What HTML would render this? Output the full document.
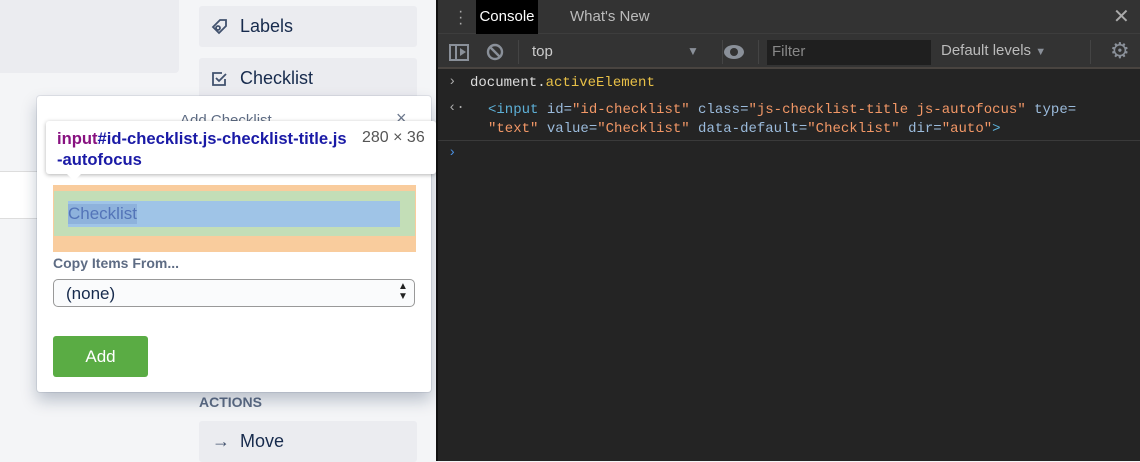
<!DOCTYPE html>
<html><head><style>
*{margin:0;padding:0;box-sizing:border-box}
body{width:1140px;height:461px;overflow:hidden;position:relative;background:#f4f5f7;font-family:"Liberation Sans",sans-serif}
.a{position:absolute}
.btn{position:absolute;left:199px;width:218px;height:41px;background:#ebecf0;border-radius:3px;font-size:18px;color:#172b4d;line-height:41px;padding-left:41px}
.dt{left:438px;top:0;width:702px;height:461px;background:#242424}
.mono{font-family:"Liberation Mono",monospace;font-size:14px}
</style></head><body>
<div class="a" style="left:0;top:0;width:179px;height:73px;background:#ebecf0;border-radius:0 0 4px 0"></div>
<div class="a" style="left:0;top:171px;width:40px;height:48px;background:#fff;border-top:1px solid #ddd;border-bottom:1px solid #ddd"></div>
<div class="btn" style="top:6px">Labels</div>
<svg class="a" style="left:210px;top:17px" width="20" height="20" viewBox="0 0 20 20" fill="none" stroke="#42526e" stroke-width="1.8"><path d="M3 10 L10 3 H16 V9 L9 16 Z"/><circle cx="8" cy="11" r="2"/></svg>
<div class="btn" style="top:58px">Checklist</div>
<svg class="a" style="left:211px;top:70px" width="18" height="18" viewBox="0 0 18 18" fill="none" stroke="#42526e" stroke-width="1.8"><path d="M14 9v6H2V3h9"/><path d="M5 8l3 3 7-7"/></svg>
<div class="a" style="left:199px;top:394px;font-size:14px;font-weight:bold;color:#5e6c84">ACTIONS</div>
<div class="btn" style="top:421px">Move</div>
<div class="a" style="left:212px;top:431px;font-size:18px;color:#42526e">→</div>

<div class="a" style="left:37px;top:96px;width:394px;height:296px;background:#fff;border-radius:3px;box-shadow:0 8px 16px rgba(9,30,66,.25),0 0 0 1px rgba(9,30,66,.08)"></div>
<div class="a" style="left:180px;top:112px;font-size:15px;color:#5e6c84">Add Checklist</div>
<div class="a" style="left:396px;top:108px;font-size:18px;color:#6b778c">×</div>
<div class="a" style="left:53px;top:185px;width:363px;height:67px;background:#f9cc9d"></div>
<div class="a" style="left:54px;top:191px;width:361px;height:45px;background:#c3deb7"></div>
<div class="a" style="left:68px;top:201px;width:332px;height:26px;background:#9fc4e7"></div>
<div class="a" style="left:68px;top:204px;font-size:17px;color:#5374b8;background:#8eb2dc">Checklist</div>
<div class="a" style="left:53px;top:255px;font-size:14px;font-weight:bold;color:#5e6c84">Copy Items From...</div>
<div class="a" style="left:53px;top:279px;width:362px;height:28px;border:1px solid #999;border-radius:5px;background:#fafbfc;font-size:17px;color:#172b4d;padding:4px 12px">(none)</div>
<div class="a" style="left:398px;top:282px;font-size:10px;line-height:10px;color:#222">▲<br>▼</div>
<div class="a" style="left:53px;top:336px;width:95px;height:41px;background:#5aac44;border-radius:3px;color:#fff;font-size:17px;text-align:center;line-height:41px">Add</div>

<div class="a" style="left:46px;top:121px;width:390px;height:53px;background:#fff;border-radius:3px;box-shadow:0 1px 4px rgba(0,0,0,.3)"></div>
<div class="a" style="left:57px;top:128px;font-size:16.6px;font-weight:bold;line-height:21px;color:#1a1aa6;width:292px;word-break:break-all"><span style="color:#881280">input</span>#id-checklist.js-checklist-title.js-autofocus</div>
<div class="a" style="left:362px;top:129px;font-size:16px;color:#555">280 × 36</div>
<div class="a" style="left:66px;top:173px;width:0;height:0;border-left:8px solid transparent;border-right:8px solid transparent;border-top:8px solid #fff"></div>

<div class="a" style="left:436px;top:0;width:2px;height:461px;background:#111"></div>
<div class="a dt">
 <div class="a" style="left:0;top:0;width:702px;height:34px;background:#333;border-bottom:1px solid #3d3d3d"></div>
 <div class="a" style="left:20px;top:9px;color:#aaa;font-size:16px;line-height:6px">·<br>·<br>·</div>
 <div class="a" style="left:38px;top:0;width:62px;height:34px;background:#000;color:#fff;font-size:15px;line-height:34px;text-align:center">Console</div>
 <div class="a" style="left:132px;top:8px;color:#bbb;font-size:15px">What's New</div>
 <div class="a" style="left:675px;top:4px;color:#aaa;font-size:20px">✕</div>
 <div class="a" style="left:0;top:34px;width:702px;height:35px;background:#333;border-bottom:2px solid #494440"></div>
 <div class="a" style="left:11px;top:44px;width:20px;height:17px;border:2px solid #8a9099"></div>
 <div class="a" style="left:17px;top:44px;width:2px;height:17px;background:#8a9099"></div>
 <div class="a" style="left:22px;top:48px;border-left:6px solid #8a9099;border-top:4px solid transparent;border-bottom:4px solid transparent"></div>
 <svg class="a" style="left:48px;top:43px" width="18" height="18"><circle cx="9" cy="9" r="7" fill="none" stroke="#8a9099" stroke-width="2.4"/><path d="M4 4l10 10" stroke="#8a9099" stroke-width="2.4"/></svg>
 <div class="a" style="left:80px;top:40px;width:1px;height:24px;background:#444"></div>
 <div class="a" style="left:94px;top:43px;color:#ccc;font-size:15px">top</div>
 <div class="a" style="left:249px;top:44px;color:#8a9099;font-size:12px">▼</div>
 <div class="a" style="left:284px;top:40px;width:1px;height:24px;background:#444"></div>
 <svg class="a" style="left:285px;top:43px" width="22" height="18"><ellipse cx="11" cy="9" rx="10" ry="7" fill="#8a9099"/><circle cx="11" cy="9" r="4" fill="#333"/></svg>
 <div class="a" style="left:320px;top:40px;width:1px;height:24px;background:#444"></div>
 <div class="a" style="left:329px;top:40px;width:164px;height:25px;background:#1f1f1f;color:#888;font-size:15px;padding:3px 5px">Filter</div>
 <div class="a" style="left:503px;top:42px;color:#bbb;font-size:15px">Default levels <span style="font-size:11px;color:#8a9099">▼</span></div>
 <div class="a" style="left:652px;top:40px;width:1px;height:24px;background:#444"></div>
 <div class="a" style="left:672px;top:38px;color:#8a9099;font-size:22px">⚙</div>
 <div class="a mono" style="left:10px;top:74px;color:#aaa">›</div>
 <div class="a mono" style="left:32px;top:75px;color:#ddd">document.<span style="color:#e8c047">activeElement</span></div>
 <div class="a mono" style="left:10px;top:100px;color:#aaa">‹·</div>
 <div class="a mono" style="left:50px;top:101px;line-height:19px;color:#9bbbdc;width:630px"><span style="color:#5db0d7">&lt;input</span> id=<span style="color:#f29766">"id-checklist"</span> class=<span style="color:#f29766">"js-checklist-title js-autofocus"</span> type=<br><span style="color:#f29766">"text"</span> value=<span style="color:#f29766">"Checklist"</span> data-default=<span style="color:#f29766">"Checklist"</span> dir=<span style="color:#f29766">"auto"</span><span style="color:#5db0d7">&gt;</span></div>
 <div class="a" style="left:0;top:140px;width:702px;height:1px;background:#3a3a3a"></div>
 <div class="a mono" style="left:10px;top:145px;color:#4a8fe0">›</div>
</div>
</body></html>
